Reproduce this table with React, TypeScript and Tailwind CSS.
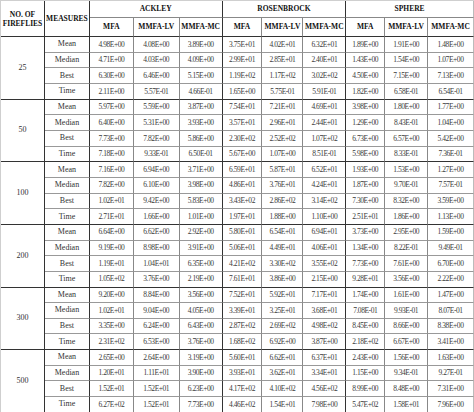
import React from 'react'

type Group = { n: string; rows: string[][] }

const MEASURES = ['Mean', 'Median', 'Best', 'Time']

const GROUPS: Group[] = [
  {
    n: '25',
    rows: [
      ['4.98E+00', '4.08E+00', '3.89E+00', '3.75E+01', '4.02E+01', '6.32E+01', '1.89E+00', '1.91E+00', '1.48E+00'],
      ['4.71E+00', '4.03E+00', '4.09E+00', '2.99E+01', '2.85E+01', '2.40E+01', '1.43E+00', '1.54E+00', '1.07E+00'],
      ['6.30E+00', '6.46E+00', '5.15E+00', '1.19E+02', '1.17E+02', '3.02E+02', '4.50E+00', '7.15E+00', '7.13E+00'],
      ['2.11E+00', '5.57E-01', '4.66E-01', '1.65E+00', '5.75E-01', '5.91E-01', '1.82E+00', '6.58E-01', '6.54E-01'],
    ],
  },
  {
    n: '50',
    rows: [
      ['5.97E+00', '5.59E+00', '3.87E+00', '7.54E+01', '7.21E+01', '4.69E+01', '3.98E+00', '1.80E+00', '1.77E+00'],
      ['6.40E+00', '5.31E+00', '3.93E+00', '3.57E+01', '2.96E+01', '2.44E+01', '1.29E+00', '8.43E-01', '1.04E+00'],
      ['7.73E+00', '7.82E+00', '5.86E+00', '2.30E+02', '2.52E+02', '1.07E+02', '6.73E+00', '6.57E+00', '5.42E+00'],
      ['7.18E+00', '9.33E-01', '6.50E-01', '5.67E+00', '1.07E+00', '8.51E-01', '5.98E+00', '8.33E-01', '7.36E-01'],
    ],
  },
  {
    n: '100',
    rows: [
      ['7.16E+00', '6.94E+00', '3.71E+00', '6.59E+01', '5.87E+01', '6.52E+01', '1.93E+00', '1.53E+00', '1.27E+00'],
      ['7.82E+00', '6.10E+00', '3.98E+00', '4.86E+01', '3.76E+01', '4.24E+01', '1.87E+00', '9.70E-01', '7.57E-01'],
      ['1.02E+01', '9.42E+00', '5.83E+00', '3.43E+02', '2.86E+02', '3.14E+02', '7.30E+00', '8.32E+00', '3.59E+00'],
      ['2.71E+01', '1.66E+00', '1.01E+00', '1.97E+01', '1.88E+00', '1.10E+00', '2.51E+01', '1.86E+00', '1.13E+00'],
    ],
  },
  {
    n: '200',
    rows: [
      ['6.64E+00', '6.62E+00', '2.92E+00', '5.80E+01', '6.54E+01', '6.94E+01', '3.73E+00', '2.95E+00', '1.59E+00'],
      ['9.19E+00', '8.98E+00', '3.91E+00', '5.06E+01', '4.49E+01', '4.06E+01', '1.34E+00', '8.22E-01', '9.49E-01'],
      ['1.19E+01', '1.04E+01', '6.35E+00', '4.21E+02', '3.30E+02', '3.55E+02', '7.73E+00', '7.61E+00', '6.70E+00'],
      ['1.05E+02', '3.76E+00', '2.19E+00', '7.61E+01', '3.86E+00', '2.15E+00', '9.28E+01', '3.56E+00', '2.22E+00'],
    ],
  },
  {
    n: '300',
    rows: [
      ['9.20E+00', '8.84E+00', '3.56E+00', '7.52E+01', '5.92E+01', '7.17E+01', '1.74E+00', '1.61E+00', '1.47E+00'],
      ['1.02E+01', '9.04E+00', '4.05E+00', '3.39E+01', '3.25E+01', '3.68E+01', '7.08E-01', '9.93E-01', '8.07E-01'],
      ['3.35E+00', '6.24E+00', '6.43E+00', '2.87E+02', '2.69E+02', '4.98E+02', '8.45E+00', '8.66E+00', '8.38E+00'],
      ['2.31E+02', '6.53E+00', '3.76E+00', '1.68E+02', '6.92E+00', '3.87E+00', '2.18E+02', '6.67E+00', '3.41E+00'],
    ],
  },
  {
    n: '500',
    rows: [
      ['2.65E+00', '2.64E+00', '3.19E+00', '5.60E+01', '6.62E+01', '6.37E+01', '2.43E+00', '1.56E+00', '1.63E+00'],
      ['1.20E+01', '1.11E+01', '3.90E+00', '3.93E+01', '3.62E+01', '3.34E+01', '1.15E+00', '9.34E-01', '9.27E-01'],
      ['1.52E+01', '1.52E+01', '6.23E+00', '4.17E+02', '4.10E+02', '4.56E+02', '8.99E+00', '8.48E+00', '7.31E+00'],
      ['6.27E+02', '1.52E+01', '7.73E+00', '4.46E+02', '1.54E+01', '7.98E+00', '5.47E+02', '1.58E+01', '7.96E+00'],
    ],
  },
]

const WIDTHS = [44, 45, 44, 46, 43, 40, 41, 43, 39, 43, 46]

// data column index (0..8) whose right edge closes a function block
const BLOCK_END = [2, 5]

function rightBorder(i: number) {
  if (BLOCK_END.includes(i)) return 'border-r-[#333]'
  return i === 8 ? 'border-r-[#bbb]' : 'border-r-[#888]'
}

export default function App() {
  return (
    <div className="h-[412px] w-[474px] overflow-hidden bg-white font-['Liberation_Serif',serif] text-[#111]">
      <table className="table-fixed border-separate border-spacing-0 border-l border-t border-l-[#cfcfcf] border-t-[#cfcfcf]">
        <colgroup>
          {WIDTHS.map((w, i) => (
            <col key={i} style={{ width: w }} />
          ))}
        </colgroup>
        <thead>
          <tr className="h-[17px]">
            <th
              rowSpan={2}
              className="border-b border-r border-b-[#333] border-r-[#333] p-0 text-[7.5px] font-bold leading-[9px]"
            >
              NO. OF
              <br />
              FIREFLIES
            </th>
            <th
              rowSpan={2}
              className="border-b border-r border-b-[#333] border-r-[#333] p-0 text-[7.5px] font-bold leading-none"
            >
              MEASURES
            </th>
            <th colSpan={3} className="border-b border-r border-b-[#888] border-r-[#333] p-0 text-[7.5px] font-bold leading-none">
              ACKLEY
            </th>
            <th colSpan={3} className="border-b border-r border-b-[#888] border-r-[#333] p-0 text-[7.5px] font-bold leading-none">
              ROSENBROCK
            </th>
            <th colSpan={3} className="border-b border-r border-b-[#888] border-r-[#bbb] p-0 text-[7.5px] font-bold leading-none">
              SPHERE
            </th>
          </tr>
          <tr className="h-[19px]">
            {['MFA', 'MMFA-LV', 'MMFA-MC', 'MFA', 'MMFA-LV', 'MMFA-MC', 'MFA', 'MMFA-LV', 'MMFA-MC'].map((h, i) => (
              <th key={i} className={`border-b border-r border-b-[#333] p-0 text-[7.5px] font-bold leading-none ${rightBorder(i)}`}>
                {h}
              </th>
            ))}
          </tr>
        </thead>
        <tbody>
          {GROUPS.map((g) =>
            g.rows.map((row, r) => {
              const bottom = r === 3 ? 'border-b-[#333]' : 'border-b-[#999]'
              return (
                <tr key={`${g.n}-${r}`} className="h-[15.67px]">
                  {r === 0 ? (
                    <td
                      rowSpan={4}
                      className="border-b border-r border-b-[#333] border-r-[#333] p-0 text-center text-[8px] leading-none text-[#333]"
                    >
                      {g.n}
                    </td>
                  ) : null}
                  <td className={`border-b border-r border-r-[#333] p-0 text-center text-[8px] leading-none text-[#333] ${bottom}`}>
                    {MEASURES[r]}
                  </td>
                  {row.map((v, i) => (
                    <td
                      key={i}
                      className={`border-b border-r p-0 text-center text-[7.5px] leading-none tracking-[-0.45px] text-[#3a3a3a] ${bottom} ${rightBorder(i)}`}
                    >
                      {v}
                    </td>
                  ))}
                </tr>
              )
            }),
          )}
        </tbody>
      </table>
    </div>
  )
}
